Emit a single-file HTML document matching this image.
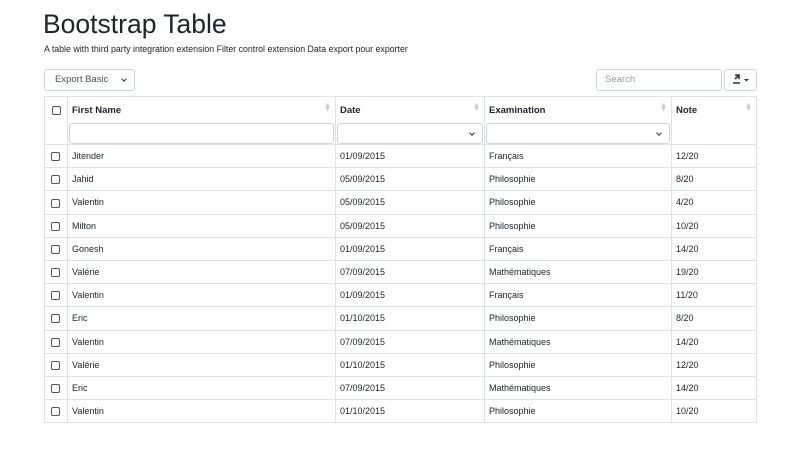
<!DOCTYPE html>
<html><head><style>
body{margin:0;width:800px;height:450px;background:#fff;font-family:"Liberation Sans",sans-serif;color:#212529;position:relative;overflow:hidden}
h1{position:absolute;left:43px;top:9px;margin:0;font-size:26.5px;font-weight:300;}
.sub{position:absolute;left:44px;top:44px;font-size:8.8px}
.sel{position:absolute;left:44px;top:69px;width:89px;height:20px;border:1px solid #ced4da;border-radius:3px;font-size:9.5px;color:#495057;line-height:20px;box-sizing:content-box}
.sel span{position:absolute;left:10px}
.chev{position:absolute;right:8px;top:7px;width:3px;height:3px;border-right:1.3px solid #333;border-bottom:1.3px solid #333;transform:rotate(45deg)}
.search{position:absolute;left:596px;top:69px;width:124px;height:20px;border:1px solid #ced4da;border-radius:3px;font-size:9.5px;color:#999;line-height:20px;text-indent:8px}
.btn{position:absolute;left:724px;top:69px;width:31px;height:20px;border:1px solid #ced4da;border-radius:3px}
table{position:absolute;left:44px;top:96px;width:712px;border-collapse:collapse;table-layout:fixed;font-size:9px}
td,th{border:1px solid #dee2e6;padding:0 0 0 4px;height:23.2px;text-align:left;position:relative;box-sizing:border-box}
th{height:48px;vertical-align:top;font-weight:bold;font-size:9.5px;padding-top:8px}
.cb{display:inline-block;width:7px;height:7px;border:1px solid #555;border-radius:2px;margin-left:2px;vertical-align:middle}
.inp{position:absolute;left:1px;right:1px;top:26px;height:21px;border:1px solid #ced4da;border-radius:3px;box-sizing:border-box}
.s{position:absolute;right:4px;top:7px;color:#ccc;font-size:7px;line-height:4px}
</style></head><body>
<h1>Bootstrap Table</h1>
<div class="sub">A table with third party integration extension Filter control extension Data export pour exporter</div>
<div class="sel"><span>Export Basic</span><div class="chev"></div></div>
<div class="search">Search</div>
<div class="btn"><svg width="31" height="20"><path d="M8 13h7M10 5h4v4M14 5l-4 4" stroke="#333" stroke-width="1.6" fill="none"/><path d="M19 9h5l-2.5 2.5z" fill="#333"/></svg></div>
<table>
<colgroup><col style="width:23px"><col style="width:268px"><col style="width:149px"><col style="width:187px"><col style="width:85px"></colgroup>
<tr><th style="padding-left:5px"><span class="cb"></span></th><th>First Name<span class="s">▲<br>▼</span><div class="inp"></div></th><th>Date<span class="s">▲<br>▼</span><div class="inp"><div class="chev" style="top:7px"></div></div></th><th>Examination<span class="s">▲<br>▼</span><div class="inp"><div class="chev" style="top:7px"></div></div></th><th>Note<span class="s">▲<br>▼</span></th></tr>
<tr><td><span class="cb"></span></td><td>Jitender</td><td>01/09/2015</td><td>Français</td><td>12/20</td></tr>
<tr><td><span class="cb"></span></td><td>Jahid</td><td>05/09/2015</td><td>Philosophie</td><td>8/20</td></tr>
<tr><td><span class="cb"></span></td><td>Valentin</td><td>05/09/2015</td><td>Philosophie</td><td>4/20</td></tr>
<tr><td><span class="cb"></span></td><td>Milton</td><td>05/09/2015</td><td>Philosophie</td><td>10/20</td></tr>
<tr><td><span class="cb"></span></td><td>Gonesh</td><td>01/09/2015</td><td>Français</td><td>14/20</td></tr>
<tr><td><span class="cb"></span></td><td>Valérie</td><td>07/09/2015</td><td>Mathématiques</td><td>19/20</td></tr>
<tr><td><span class="cb"></span></td><td>Valentin</td><td>01/09/2015</td><td>Français</td><td>11/20</td></tr>
<tr><td><span class="cb"></span></td><td>Eric</td><td>01/10/2015</td><td>Philosophie</td><td>8/20</td></tr>
<tr><td><span class="cb"></span></td><td>Valentin</td><td>07/09/2015</td><td>Mathématiques</td><td>14/20</td></tr>
<tr><td><span class="cb"></span></td><td>Valérie</td><td>01/10/2015</td><td>Philosophie</td><td>12/20</td></tr>
<tr><td><span class="cb"></span></td><td>Eric</td><td>07/09/2015</td><td>Mathématiques</td><td>14/20</td></tr>
<tr><td><span class="cb"></span></td><td>Valentin</td><td>01/10/2015</td><td>Philosophie</td><td>10/20</td></tr>
</table>
</body></html>
